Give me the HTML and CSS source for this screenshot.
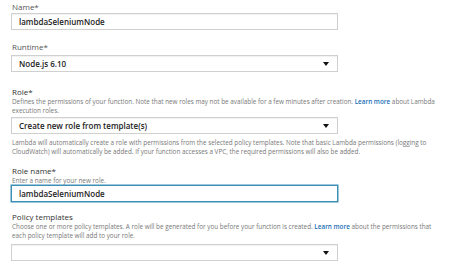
FILE: index.html
```html
<!DOCTYPE html>
<html>
<head>
<meta charset="utf-8">
<link rel="stylesheet" href="styles.css">
</head>
<body>
<div class="form">
  <div class="field f-name">
    <div class="label light">Name*</div>
    <div class="input">lambdaSeleniumNode</div>
  </div>
  <div class="field f-runtime">
    <div class="label light">Runtime*</div>
    <div class="input select">Node.js 6.10<span class="arrow"></span></div>
  </div>
  <div class="field f-role">
    <div class="label">Role*</div>
    <div class="desc">Defines the permissions of your function. Note that new roles may not be available for a few minutes after creation. <a class="link">Learn more</a> about Lambda execution roles.</div>
    <div class="input select">Create new role from template(s)<span class="arrow"></span></div>
    <div class="desc after">Lambda will automatically create a role with permissions from the selected policy templates. Note that basic Lambda permissions (logging to CloudWatch) will automatically be added. If your function accesses a VPC, the required permissions will also be added.</div>
  </div>
  <div class="field f-rolename">
    <div class="label">Role name*</div>
    <div class="desc">Enter a name for your new role.</div>
    <div class="input focus">lambdaSeleniumNode</div>
  </div>
  <div class="field f-policy">
    <div class="label">Policy templates</div>
    <div class="desc narrow">Choose one or more policy templates. A role will be generated for you before your function is created. <a class="link">Learn more</a> about the permissions that each policy template will add to your role.</div>
    <div class="input select"><span class="arrow"></span></div>
  </div>
</div>
</body>
</html>
```
FILE: styles.css
```css
html, body {
  margin: 0;
  padding: 0;
  background: #fff;
}
body {
  font-family: "Open Sans", "Liberation Sans", sans-serif;
  color: #222;
  width: 474px;
  height: 268px;
  overflow: hidden;
}
.form {
  padding: 1px 0 0 12px;
  width: 440px;
  display: flex;
  flex-direction: column;
}
.label {
  font-size: 8px;
  line-height: 11px;
  color: #333;
}
.label.light {
  color: #555;
}
.desc {
  font-size: 6.35px;
  line-height: 9px;
  color: #777;
  width: 437px;
}
.desc.narrow {
  width: 432px;
}
.link {
  color: #1a6fb5;
  font-weight: 600;
}
.input {
  box-sizing: border-box;
  width: 327px;
  height: 17px;
  margin-left: -1px;
  border: 1px solid #d0d0d0;
  box-shadow: inset 0 1px 1px rgba(0,0,0,0.06);
  font-size: 8px;
  line-height: 15px;
  padding-left: 7px;
  color: #222;
  position: relative;
  font-weight: 600;
}
.input.focus {
  border-color: #3d8fb8;
  box-shadow: 0 0 0 0.5px #3d8fb8;
}
.arrow {
  position: absolute;
  right: 8px;
  top: 6px;
  width: 0;
  height: 0;
  border-left: 3px solid transparent;
  border-right: 3px solid transparent;
  border-top: 4px solid #111;
}
.field {
  display: flex;
  flex-direction: column;
}
.f-name .label { margin-bottom: 1px; }
.f-runtime { margin-top: 11px; }
.f-runtime .label { margin-bottom: 3px; }
.f-role { margin-top: 14px; }
.f-role .desc { margin-bottom: 2px; }
.f-role .desc.after { margin-top: 4px; }
.f-rolename { margin-top: 7px; }
.f-rolename .desc { margin-bottom: 0; }
.f-policy { margin-top: 9px; }
.f-policy .desc { margin-bottom: 4px; }
```
